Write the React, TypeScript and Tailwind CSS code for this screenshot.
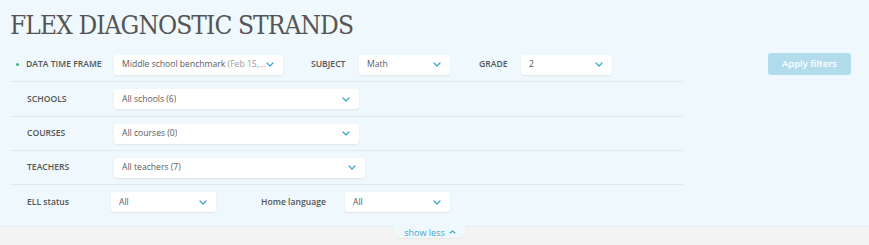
import React from 'react';

function Chevron() {
  return (
    <svg width="8" height="5" viewBox="0 0 8 5" className="shrink-0">
      <path d="M1 1l3 3 3-3" fill="none" stroke="#3aa6d0" strokeWidth="1.2" strokeLinecap="round" strokeLinejoin="round" />
    </svg>
  );
}

interface SelectProps {
  value: string;
  hint?: string;
  width: string;
}

function Select({ value, hint, width }: SelectProps) {
  return (
    <div className={`${width} h-[20px] bg-white rounded-[3px] shadow-[0_1px_2px_rgba(0,0,0,0.08)] flex items-center justify-between pl-[8px] pr-[9px] text-[8.6px] text-[#5a5a5a]`}>
      <span className="whitespace-nowrap overflow-hidden">
        {value}
        {hint && <span className="text-[#9a9a9a]"> {hint}</span>}
      </span>
      <Chevron />
    </div>
  );
}

function Label({ children, upper = true, className = '' }: { children: React.ReactNode; upper?: boolean; className?: string }) {
  return (
    <span className={`text-[8.6px] font-semibold text-[#555] ${upper ? 'uppercase' : ''} ${className}`}>
      {children}
    </span>
  );
}

export default function App() {
  return (
    <div className="w-[869px] h-[245px] overflow-hidden bg-[#f3f3f3] font-['Open_Sans',sans-serif]">
      <div className="relative h-[227px] bg-[#eff8fc] border-b border-[#e3edf1]">
        <h1 className="pl-[10px] pt-[8px] h-[47px] text-[26px] leading-[34px] text-[#555] font-['DejaVu_Serif',serif] font-stretch-condensed tracking-[-0.9px]">
          FLEX DIAGNOSTIC STRANDS
        </h1>

        <div className="flex">
          <div className="w-[673px] ml-[10px]">
            <div className="h-[35px] pt-[1px] flex items-center border-b border-[#dcebf2]">
              <span className="w-[3px] h-[3px] rounded-full bg-[#3cb878] ml-[6px] mr-[7px]" />
              <Label className="w-[88px]">Data time frame</Label>
              <Select value="Middle school benchmark" hint="(Feb 15,..." width="w-[169px]" />
              <Label className="ml-[28px] w-[48px]">Subject</Label>
              <Select value="Math" width="w-[91px]" />
              <Label className="ml-[29px] w-[42px]">Grade</Label>
              <Select value="2" width="w-[91px]" />
            </div>
            <div className="h-[35px] flex items-center border-b border-[#dcebf2]">
              <Label className="ml-[17px] w-[87px]">Schools</Label>
              <Select value="All schools (6)" width="w-[245px]" />
            </div>
            <div className="h-[34px] flex items-center border-b border-[#dcebf2]">
              <Label className="ml-[17px] w-[87px]">Courses</Label>
              <Select value="All courses (0)" width="w-[245px]" />
            </div>
            <div className="h-[34px] flex items-center border-b border-[#dcebf2]">
              <Label className="ml-[17px] w-[87px]">Teachers</Label>
              <Select value="All teachers (7)" width="w-[251px]" />
            </div>
            <div className="h-[34px] flex items-center">
              <Label upper={false} className="ml-[17px] w-[84px]">ELL status</Label>
              <Select value="All" width="w-[105px]" />
              <Label upper={false} className="ml-[45px] w-[84px]">Home language</Label>
              <Select value="All" width="w-[105px]" />
            </div>
          </div>
          <div className="ml-auto mr-[18px] pt-[2px]">
            <button className="w-[83px] h-[22px] rounded-[3px] bg-[#b2dcec] text-white text-[9.5px] font-semibold leading-none">
              Apply filters
            </button>
          </div>
        </div>

        <div className="absolute left-[395px] top-[226px] w-[70px] h-[12px] bg-[#eff8fc] rounded-b-[6px] flex items-center justify-center gap-[4px] text-[9px] text-[#3aa6d0] shadow-[0_1px_1px_rgba(0,0,0,0.05)]">
          <span className="leading-none">show less</span>
          <svg width="7" height="4" viewBox="0 0 7 4">
            <path d="M1 3l2.5-2 2.5 2" fill="none" stroke="#3aa6d0" strokeWidth="1.2" strokeLinecap="round" strokeLinejoin="round" />
          </svg>
        </div>
      </div>
    </div>
  );
}
